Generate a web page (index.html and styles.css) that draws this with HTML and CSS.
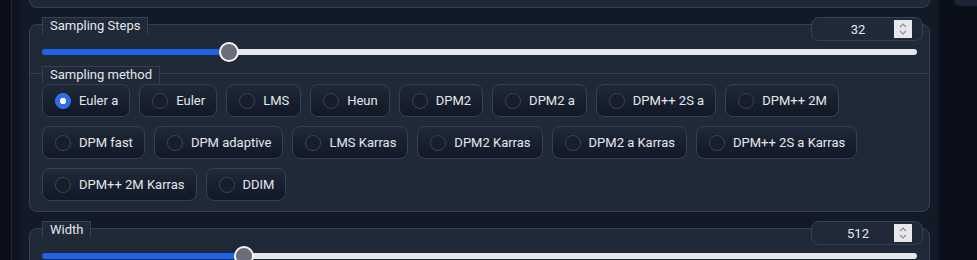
FILE: index.html
```html
<!DOCTYPE html>
<html lang="en">
<head>
  <meta charset="UTF-8">
  <title>txt2img settings</title>
  <link rel="stylesheet" href="styles.css">
</head>
<body>
  <div class="shell">
    <div class="col">
      <div class="block prev"></div>

      <div class="group">
        <div class="slider-block">
          <div class="head">
            <span class="label">Sampling Steps</span>
            <div class="num">
              <span class="val">32</span>
              <span class="spin">
                <svg width="10" height="14" viewBox="0 0 10 14"><polyline points="2,5 5,2 8,5" fill="none" stroke="#8c8c94" stroke-width="1.2"/><polyline points="2,9 5,12 8,9" fill="none" stroke="#8c8c94" stroke-width="1.2"/></svg>
              </span>
            </div>
          </div>
          <div class="range">
            <div class="fill" style="width: 178px"></div>
            <div class="thumb"></div>
            <div class="rest"></div>
          </div>
        </div>

        <div class="radio-block">
          <div class="head">
            <span class="label">Sampling method</span>
          </div>
          <div class="options">
            <label class="opt checked"><span class="dot"></span>Euler a</label>
            <label class="opt"><span class="dot"></span>Euler</label>
            <label class="opt"><span class="dot"></span>LMS</label>
            <label class="opt"><span class="dot"></span>Heun</label>
            <label class="opt"><span class="dot"></span>DPM2</label>
            <label class="opt"><span class="dot"></span>DPM2 a</label>
            <label class="opt"><span class="dot"></span>DPM++ 2S a</label>
            <label class="opt"><span class="dot"></span>DPM++ 2M</label>
            <label class="opt"><span class="dot"></span>DPM fast</label>
            <label class="opt"><span class="dot"></span>DPM adaptive</label>
            <label class="opt"><span class="dot"></span>LMS Karras</label>
            <label class="opt"><span class="dot"></span>DPM2 Karras</label>
            <label class="opt"><span class="dot"></span>DPM2 a Karras</label>
            <label class="opt"><span class="dot"></span>DPM++ 2S a Karras</label>
            <label class="opt"><span class="dot"></span>DPM++ 2M Karras</label>
            <label class="opt"><span class="dot"></span>DDIM</label>
          </div>
        </div>
      </div>

      <div class="group">
        <div class="slider-block">
          <div class="head">
            <span class="label">Width</span>
            <div class="num">
              <span class="val">512</span>
              <span class="spin">
                <svg width="10" height="14" viewBox="0 0 10 14"><polyline points="2,5 5,2 8,5" fill="none" stroke="#8c8c94" stroke-width="1.2"/><polyline points="2,9 5,12 8,9" fill="none" stroke="#8c8c94" stroke-width="1.2"/></svg>
              </span>
            </div>
          </div>
          <div class="range">
            <div class="fill" style="width: 193px"></div>
            <div class="thumb"></div>
            <div class="rest"></div>
          </div>
        </div>
      </div>
    </div>
  </div>

  <div class="side">
    <div class="side-block"></div>
  </div>
</body>
</html>
```

FILE: styles.css
```css
/* page */
body {
  margin: 0;
  height: 100vh;
  overflow: hidden;
  display: flex;
  background: #0b0f19;
  font-family: "Roboto", "Noto Sans", sans-serif;
  color: #e5e7eb;
}

.shell {
  margin-left: 11px;
  border-left: 1px solid #1f2633;
  padding-left: 8px;
  background: #0e131e;
}

.col {
  width: 919px;
  height: 100%;
  box-sizing: border-box;
  padding: 0 9px;
  background: #131a27;
  display: flex;
  flex-direction: column;
}

/* blocks */
.block.prev {
  height: 7px;
  flex-shrink: 0;
  background: #1f2937;
  border: 1px solid #374151;
  border-top: none;
  border-radius: 0 0 8px 8px;
}

.group {
  margin-top: 16px;
  background: #1f2937;
  border: 1px solid #374151;
  border-radius: 8px;
  flex-shrink: 0;
}

.slider-block {
  padding: 0 12px 11px;
}

.radio-block {
  border-top: 1px solid #374151;
  padding: 0 12px 10px;
}

.head {
  display: flex;
  justify-content: space-between;
  align-items: flex-start;
  margin-top: -8px;
}

.label {
  height: 17px;
  box-sizing: border-box;
  padding: 0 7px;
  border: 1px solid #374151;
  border-bottom: none;
  background: #1f2937;
  font-size: 13px;
  line-height: 16px;
  color: #e5e7eb;
}

/* number input */
.num {
  width: 112px;
  height: 24px;
  box-sizing: border-box;
  margin-right: -6px;
  border: 1px solid #374151;
  border-radius: 8px;
  background: #1f2937;
  display: flex;
  align-items: center;
  padding: 0 10px;
}

.val {
  flex: 1;
  text-align: center;
  font-size: 13px;
}

.spin {
  width: 18px;
  height: 18px;
  background: #e8e8ec;
  display: flex;
  align-items: center;
  justify-content: center;
}

/* slider */
.range {
  margin-top: 1px;
  height: 20px;
  display: flex;
  align-items: center;
}

.fill {
  height: 6px;
  background: #1d64e8;
  border-radius: 3px 0 0 3px;
}

.thumb {
  width: 20px;
  height: 20px;
  box-sizing: border-box;
  border: 2px solid #f3f4f6;
  border-radius: 50%;
  background: #6b6d7a;
  margin: 0 -1px;
  position: relative;
  z-index: 1;
}

.rest {
  flex: 1;
  height: 6px;
  background: #e5e7eb;
  border-radius: 0 3px 3px 0;
}

/* radio options */
.options {
  margin-top: 1px;
  display: flex;
  flex-wrap: wrap;
  gap: 9px;
}

.opt {
  height: 33px;
  box-sizing: border-box;
  padding: 0 11px 0 12px;
  border: 1px solid #374151;
  border-radius: 8px;
  background: linear-gradient(to top, #111827, #1f2937);
  display: inline-flex;
  align-items: center;
  gap: 8px;
  font-size: 13px;
  color: #e5e7eb;
}

.dot {
  width: 16px;
  height: 16px;
  box-sizing: border-box;
  border: 1px solid #3b4453;
  border-radius: 50%;
  background: #161d2b;
}

.opt.checked .dot {
  border-color: #3d78f2;
  background: radial-gradient(circle, #ffffff 0 3px, #2d6cf0 3.5px);
}

/* right column */
.side {
  flex: 1;
  padding-left: 15px;
}

.side-block {
  height: 6px;
  background: #1b2333;
  border-radius: 0 0 0 8px;
}
```
